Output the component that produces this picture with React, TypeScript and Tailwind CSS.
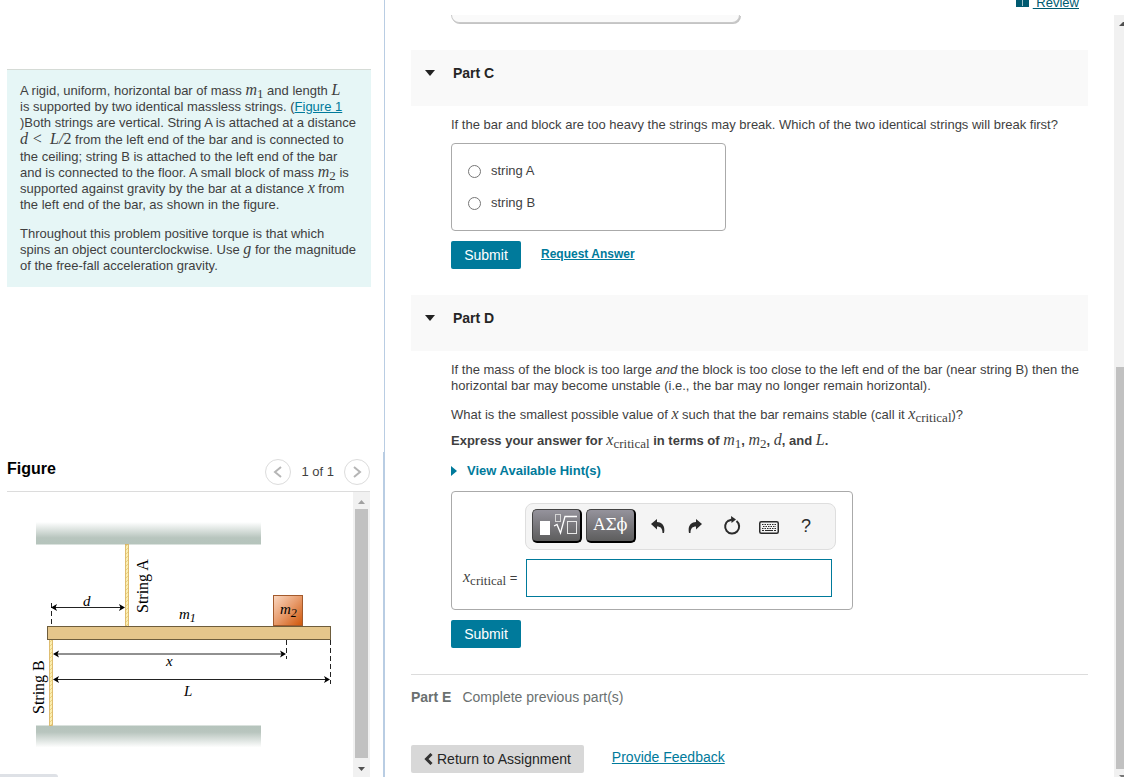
import React from 'react';

type ArrowProps = { x1: number; x2: number; y: number };

const Sym: React.FC<{ children: React.ReactNode; sub?: string }> = ({ children, sub }) => (
  <span className="font-['Liberation_Serif',serif] text-base leading-[0] font-normal">
    <i>{children}</i>
    {sub && <sub className="text-[13px]">{sub}</sub>}
  </span>
);

const DimArrow: React.FC<ArrowProps> = ({ x1, x2, y }) => (
  <g>
    <path d={`M${x1 + 2} ${y}H${x2 - 2}`} stroke="#222" strokeWidth="1" />
    <path d={`M${x1} ${y}l6 -3.5l-1.5 3.5l1.5 3.5z`} fill="#000" />
    <path d={`M${x2} ${y}l-6 -3.5l1.5 3.5l-1.5 3.5z`} fill="#000" />
  </g>
);

const BarDiagram: React.FC = () => (
  <svg
    viewBox="7 492 346 285"
    className="block h-[285px] w-[346px] shrink-0 font-['Liberation_Serif',serif]"
    role="img"
    aria-label="Bar held by two strings"
  >
    <defs>
      <linearGradient id="ceiling" x1="0" y1="0" x2="0" y2="1">
        <stop offset="0" stopColor="#fff" />
        <stop offset="0.7" stopColor="#b8c5be" />
        <stop offset="1" stopColor="#b5c4bc" />
      </linearGradient>
      <linearGradient id="floor" x1="0" y1="0" x2="0" y2="1">
        <stop offset="0" stopColor="#b5c4bc" />
        <stop offset="0.3" stopColor="#b8c5be" />
        <stop offset="1" stopColor="#fff" />
      </linearGradient>
      <linearGradient id="block" x1="0" y1="0" x2="1" y2="1">
        <stop offset="0" stopColor="#fbd9c3" />
        <stop offset="0.5" stopColor="#e79a6a" />
        <stop offset="1" stopColor="#cf5608" />
      </linearGradient>
      <pattern id="rope" width="4" height="4" patternUnits="userSpaceOnUse">
        <rect width="4" height="4" fill="#fbeeb0" />
        <path d="M0 4L4 0" stroke="#ecd080" strokeWidth="1" />
      </pattern>
    </defs>
    <rect x="36" y="522" width="225" height="22.5" fill="url(#ceiling)" />
    <rect x="36" y="725.5" width="225" height="22" fill="url(#floor)" />
    <rect x="125.5" y="544.5" width="3" height="82" fill="url(#rope)" stroke="#d8b05a" strokeWidth="0.8" />
    <rect x="49.5" y="639.5" width="3" height="86" fill="url(#rope)" stroke="#d8b05a" strokeWidth="0.8" />
    <rect x="47.5" y="626.5" width="283" height="13" fill="#e5c68b" stroke="#6e5d3c" />
    <rect x="273.5" y="595.5" width="29" height="30" fill="url(#block)" stroke="#a35a2c" />
    <g stroke="#222" strokeDasharray="5 3">
      <path d="M51.5 603V626" />
      <path d="M286.5 640V659" />
      <path d="M330.5 640V684" />
    </g>
    <DimArrow x1={51} x2={125} y={607.5} />
    <DimArrow x1={53} x2={286} y={654} />
    <DimArrow x1={53} x2={330} y={679.5} />
    <g fontSize="15" fontStyle="italic" fill="#000">
      <text x="83" y="606">d</text>
      <text x="179" y="619">m<tspan fontSize="12" dy="3">1</tspan></text>
      <text x="280" y="614">m<tspan fontSize="12" dy="3">2</tspan></text>
      <text x="166" y="666">x</text>
      <text x="184" y="696">L</text>
    </g>
    <g fontSize="16" fill="#000">
      <text transform="translate(148 613) rotate(-90)">String A</text>
      <text transform="translate(44 714) rotate(-90)">String B</text>
    </g>
  </svg>
);

const PartHeader: React.FC<{ title: string }> = ({ title }) => (
  <div className="h-14 bg-[#f9f9f9] px-3.5 pt-[15px]">
    <button type="button" className="flex items-center gap-[18px] text-sm leading-4 font-bold text-[#252525]">
      <svg className="h-1.5 w-2.5" viewBox="0 0 10 6" aria-hidden="true">
        <path d="M0 0H10L5 6z" fill="#222" />
      </svg>
      <h2>{title}</h2>
    </button>
  </div>
);

const SubmitButton: React.FC = () => (
  <button type="button" className="h-7 w-[70px] rounded-xs bg-[#007a9b] text-sm font-medium text-white">
    Submit
  </button>
);

const PagerButton: React.FC<{ label: string; d: string }> = ({ label, d }) => (
  <button
    type="button"
    aria-label={label}
    className="flex size-[26px] items-center justify-center rounded-full border border-[#dcdcdc]"
  >
    <svg width="12" height="14" viewBox="0 0 12 14" fill="none" stroke="#b5b5b5" strokeWidth="2" aria-hidden="true">
      <path d={d} />
    </svg>
  </button>
);

const Sidebar: React.FC = () => (
  <aside className="flex w-[385px] shrink-0 flex-col border-r border-[#b9cde3] pt-[69px]">
    <section className="mr-[13px] ml-[7px] border-t border-[#d5dbd6] bg-[#e6f6f6] p-[13px]">
      <p>
        A rigid, uniform, horizontal bar of mass <Sym sub="1">m</Sym> and length <Sym>L</Sym>
        <br />
        is supported by two identical massless strings. (
        <a href="#figure" className="text-[#007a9b] underline">Figure 1</a>
        <br />
        )Both strings are vertical. String A is attached at a distance
      </p>
      <p className="leading-[18px]">
        <Sym>d</Sym> <span className="mr-1"><Sym>&lt;</Sym></span> <Sym>L</Sym><Sym>/</Sym>
        <span className="font-['Liberation_Serif',serif] text-base leading-[0]">2</span> from the left end of the bar
        and is connected to
      </p>
      <p>
        the ceiling; string B is attached to the left end of the bar
        <br />
        and is connected to the floor. A small block of mass <Sym sub="2">m</Sym> is
        <br />
        supported against gravity by the bar at a distance <Sym>x</Sym> from
        <br />
        the left end of the bar, as shown in the figure.
      </p>
      <p className="mt-[13px]">
        Throughout this problem positive torque is that which
        <br />
        spins an object counterclockwise. Use <Sym>g</Sym> for the magnitude
        <br />
        of the free-fall acceleration gravity.
      </p>
    </section>

    <section id="figure" className="mt-[165px] flex flex-1 flex-col border-r border-[#b9cde3] pl-[7px]">
      <header className="mr-[13px] flex h-10 items-center justify-between border-b border-[#dcdcdc]">
        <h2 className="pb-1.5 text-base font-bold text-black">Figure</h2>
        <div className="flex items-center gap-2.5">
          <PagerButton label="Previous figure" d="M9 2L3 7L9 12" />
          <span>1 of 1</span>
          <PagerButton label="Next figure" d="M3 2L9 7L3 12" />
        </div>
      </header>
      <div className="mr-[13px] flex flex-1">
        <BarDiagram />
        <div className="flex w-[17px] flex-col items-center justify-between bg-[#f1f1f1] pt-2 pb-1.5">
          <svg width="7" height="4" viewBox="0 0 7 4" aria-hidden="true"><path d="M0 4L3.5 0L7 4z" fill="#a0a0a0" /></svg>
          <div className="mt-[5px] mb-[9px] w-[13px] flex-1 bg-[#c1c1c1]" />
          <svg width="7" height="4" viewBox="0 0 7 4" aria-hidden="true"><path d="M0 0L3.5 4L7 0z" fill="#505050" /></svg>
        </div>
      </div>
    </section>
  </aside>
);

const toolClass = 'flex h-[34px] w-[50px] items-center justify-center rounded-[5px] border border-r-2 border-b-2 border-[#444] border-r-black border-b-black bg-linear-to-b from-[#95939c] to-[#5d5d5d] text-white';
const iconClass = 'flex size-7 items-center justify-center text-[#2b2b2b]';

const MathToolbar: React.FC = () => (
  <div className="flex h-[47px] w-[311px] items-center rounded-lg border border-[#dedede] bg-[#f4f4f4] pb-0.5 pl-1.5">
    <div className="flex gap-1">
      <button type="button" aria-label="Templates" className={toolClass}>
        <svg width="40" height="26" viewBox="0 0 40 26" fill="none" aria-hidden="true">
          <rect x="3" y="9" width="10" height="14" fill="#fff" />
          <rect x="18.5" y="2.5" width="5" height="7" stroke="#d5d5d5" />
          <path d="M17 14L20 12.500L23.5 21L28 4.500H40" stroke="#fff" strokeWidth="1.300" />
          <rect x="30.500" y="9.500" width="9" height="12" stroke="#e8e8e8" />
        </svg>
      </button>
      <button type="button" aria-label="Symbols" className={toolClass}>
        <span className="font-['DejaVu_Serif',serif] text-base">ΑΣϕ</span>
      </button>
    </div>
    <div className="flex flex-1 items-center justify-between pr-[15px] pl-2">
      <button type="button" aria-label="Undo" className={iconClass}>
        <svg width="14" height="14" viewBox="0 0 14 14" fill="currentColor" aria-hidden="true">
          <path d="M0 5L6 0V3C11 3 14.500 7 13 14H11.500C11.500 9.500 9.500 7.500 6 7.500V10.500z" />
        </svg>
      </button>
      <button type="button" aria-label="Redo" className={iconClass}>
        <svg width="14" height="14" viewBox="0 0 14 14" fill="currentColor" aria-hidden="true">
          <path d="M14 5L8 0V3C3 3 -0.500 7 1 14H2.500C2.500 9.500 4.500 7.500 8 7.500V10.500z" />
        </svg>
      </button>
      <button type="button" aria-label="Reset" className={iconClass}>
        <svg width="18" height="19" viewBox="0 0 18 19" fill="none" aria-hidden="true">
          <path d="M5.500 4.500A7 7 0 1 0 13.500 5" stroke="currentColor" strokeWidth="2" />
          <path d="M8 0L13 3.500L8.500 7z" fill="currentColor" />
          <path d="M5 5L9 3.500" stroke="currentColor" strokeWidth="2" />
        </svg>
      </button>
      <button type="button" aria-label="Keyboard" className={iconClass}>
        <svg width="20" height="13" viewBox="0 0 20 13" fill="none" stroke="currentColor" className="mt-1" aria-hidden="true">
          <rect x="0.750" y="0.750" width="18.500" height="11.500" rx="1.500" strokeWidth="1.500" />
          <path d="M3 3.500H17M4 5.500H17M3 7.500H17" strokeDasharray="1.500 1" />
          <path d="M3 9.500H5M6 9.500H14M15 9.500H17" />
        </svg>
      </button>
      <button type="button" aria-label="Help" className={iconClass}>
        <span className="text-lg">?</span>
      </button>
    </div>
  </div>
);

const PartC: React.FC = () => (
  <section>
    <PartHeader title="Part C" />
    <div className="pt-[11px] pl-10">
      <p id="question-c">
        If the bar and block are too heavy the strings may break. Which of the two identical strings will break first?
      </p>
      <div
        role="radiogroup"
        aria-labelledby="question-c"
        className="mt-2.5 flex h-[88px] w-[275px] flex-col justify-center gap-4 rounded border border-[#aaa] pl-4"
      >
        {['string A', 'string B'].map((option) => (
          <label key={option} className="flex items-center gap-2.5">
            <input
              type="radio"
              name="part-c"
              className="size-[13px] appearance-none rounded-full border border-[#767676] bg-white checked:bg-[#007a9b]"
            />
            {option}
          </label>
        ))}
      </div>
      <div className="mt-2.5 flex items-center gap-5">
        <SubmitButton />
        <a href="#answer" className="pb-0.5 text-xs font-bold text-[#007a9b] underline">Request Answer</a>
      </div>
    </div>
  </section>
);

const PartD: React.FC = () => (
  <section className="mt-[26px]">
    <PartHeader title="Part D" />
    <div className="pt-[11px] pl-10">
      <p>
        If the mass of the block is too large <em>and</em> the block is too close to the left end of the bar (near
        string B) then the horizontal bar may become unstable (i.e., the bar may no longer remain horizontal).
      </p>
      <p className="mt-[13px]">
        What is the smallest possible value of <Sym>x</Sym> such that the bar remains stable (call it{' '}
        <Sym sub="critical">x</Sym>)?
      </p>
      <p className="mt-2.5 font-bold">
        Express your answer for <Sym sub="critical">x</Sym> in terms of <Sym sub="1">m</Sym>, <Sym sub="2">m</Sym>,{' '}
        <Sym>d</Sym>, and <Sym>L</Sym>.
      </p>
      <button type="button" className="mt-3.5 flex items-center gap-2.5 leading-4 font-bold text-[#007a9b]">
        <svg width="6" height="10" viewBox="0 0 6 10" aria-hidden="true"><path d="M0 0L6 5L0 10z" fill="#007a9b" /></svg>
        View Available Hint(s)
      </button>
      <div className="mt-3 w-[402px] rounded border border-[#aaa] pt-[11px] pb-3">
        <div className="pl-[73px]">
          <MathToolbar />
        </div>
        <div className="mt-[9px] flex items-center pl-[11px]">
          <label htmlFor="x-critical" className="w-[63px]">
            <Sym sub="critical">x</Sym> =
          </label>
          <input id="x-critical" type="text" className="h-[38px] w-[306px] border border-[#007a9b] bg-white px-2" />
        </div>
      </div>
      <div className="mt-2.5 flex">
        <SubmitButton />
      </div>
    </div>
  </section>
);

export default function App() {
  return (
    <div className="relative flex h-screen overflow-hidden bg-white font-['Liberation_Sans',Arial,sans-serif] text-[13px] leading-4 text-[#3f3f3f]">
      <Sidebar />
      <div className="mr-3 flex min-w-0 flex-1 flex-col">
        <header className="flex h-[15px] shrink-0 items-end justify-end overflow-hidden pr-[35px] pb-1">
          <a href="#review" className="mr-2.5 flex items-end gap-1 text-[#005a70]">
            <svg width="13" height="14" viewBox="0 0 13 14" className="mb-1" aria-hidden="true">
              <path d="M0 0H13V14H0z" fill="#005a70" />
              <path d="M6.500 0V13" stroke="#9fc3cc" />
            </svg>
            <span className="whitespace-pre underline"> Review</span>
          </a>
        </header>
        <div className="flex min-h-0 flex-1">
          <main className="min-w-0 flex-1 overflow-hidden px-[26px]">
            <div className="mb-[27px] ml-10 h-2 w-[289px] rounded-b-lg border border-t-0 border-[#c9c9c9] bg-[#fafafa] shadow-[1px_1px_0_#c4c4c4]" />
            <PartC />
            <PartD />
            <section className="mt-[26px] flex gap-[11px] border-t border-[#dcdcdc] pt-3 text-sm text-[#6a7070]">
              <h2 className="font-bold">Part E</h2>
              <p>Complete previous part(s)</p>
            </section>
            <footer className="mt-[38px] flex items-center gap-7 text-sm">
              <a href="#assignment" className="flex h-7 items-center gap-1 rounded-xs bg-[#d8d8d8] px-[13px] text-[#252525]">
                <svg width="9" height="12" viewBox="0 0 9 12" fill="none" stroke="#333" strokeWidth="3" aria-hidden="true">
                  <path d="M7.500 1L2.500 6L7.500 11" />
                </svg>
                Return to Assignment
              </a>
              <a href="#feedback" className="pb-1 text-[#007a9b] underline">Provide Feedback</a>
            </footer>
          </main>
          <div className="flex w-2.5 flex-col items-end overflow-hidden bg-[#f1f1f1] pt-[7px]">
            <svg width="5" height="4" viewBox="0 0 5 4" aria-hidden="true"><path d="M0 4L4 0H5V4z" fill="#505050" /></svg>
            <div className="mt-[341px] mb-1.5 w-2 flex-1 bg-[#c1c1c1]" />
            <svg width="5" height="2" viewBox="0 0 5 2" aria-hidden="true"><path d="M0 0H5V2H2z" fill="#777" /></svg>
          </div>
        </div>
      </div>
      <div className="absolute bottom-0 left-0 h-[3px] w-[58px] rounded-tr bg-[#dee1e6]" />
    </div>
  );
}
